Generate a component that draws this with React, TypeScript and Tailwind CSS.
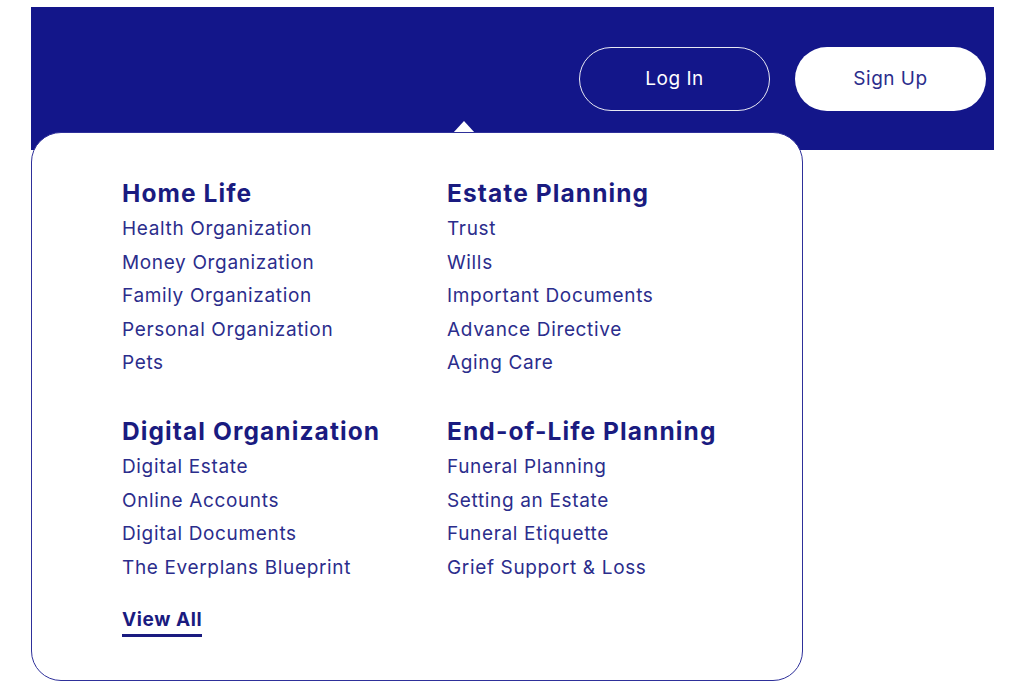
import React from "react";

const groups = [
  {
    title: "Home Life",
    links: ["Health Organization", "Money Organization", "Family Organization", "Personal Organization", "Pets"],
  },
  {
    title: "Estate Planning",
    links: ["Trust", "Wills", "Important Documents", "Advance Directive", "Aging Care"],
  },
  {
    title: "Digital Organization",
    links: ["Digital Estate", "Online Accounts", "Digital Documents", "The Everplans Blueprint"],
  },
  {
    title: "End-of-Life Planning",
    links: ["Funeral Planning", "Setting an Estate", "Funeral Etiquette", "Grief Support & Loss"],
  },
];

export default function App() {
  return (
    <div
      className="w-[1024px] h-[691px] bg-white overflow-hidden pt-[7px] pl-[31px]"
      style={{ fontFamily: "Inter, 'Noto Sans', sans-serif" }}
    >
      <div className="relative w-[963px]">
        <header className="h-[143px] bg-[#13168a] flex justify-end items-start pt-[40px] pr-[8px] gap-[25px]">
          <button className="w-[191px] h-[64px] rounded-full border border-white/90 text-white text-[19px] tracking-[0.5px] flex items-center justify-center">
            Log In
          </button>
          <button className="w-[191px] h-[64px] rounded-full bg-white text-[#2b2d8c] text-[19px] tracking-[0.5px] flex items-center justify-center">
            Sign Up
          </button>
        </header>

        <div className="absolute left-[422px] top-[114px] w-0 h-0 border-l-[11px] border-r-[11px] border-b-[12px] border-l-transparent border-r-transparent border-b-white" />

        <div className="absolute left-0 top-[125px] w-[772px] h-[549px] bg-white border border-[#2e309a] rounded-[30px] pl-[90px] pt-[44px]">
          <div className="grid grid-cols-[325px_auto] gap-y-[35px]">
            {groups.map((g) => (
              <div key={g.title} className="flex flex-col">
                <h3 className="text-[24.5px] leading-[32px] font-bold text-[#1a1b80] tracking-[1.1px] whitespace-nowrap">{g.title}</h3>
                <ul className="mt-[3px] flex flex-col">
                  {g.links.map((l) => (
                    <li key={l} className="text-[19px] leading-[33.6px] text-[#2b2d8c] tracking-[0.65px] whitespace-nowrap">
                      {l}
                    </li>
                  ))}
                </ul>
              </div>
            ))}
          </div>
          <div className="mt-[24px]">
            <span className="inline-block text-[19px] leading-[24px] font-bold text-[#1a1b80] tracking-[0.6px] border-b-[3px] border-[#1a1b80] pb-[2px]">
              View All
            </span>
          </div>
        </div>
      </div>
    </div>
  );
}
